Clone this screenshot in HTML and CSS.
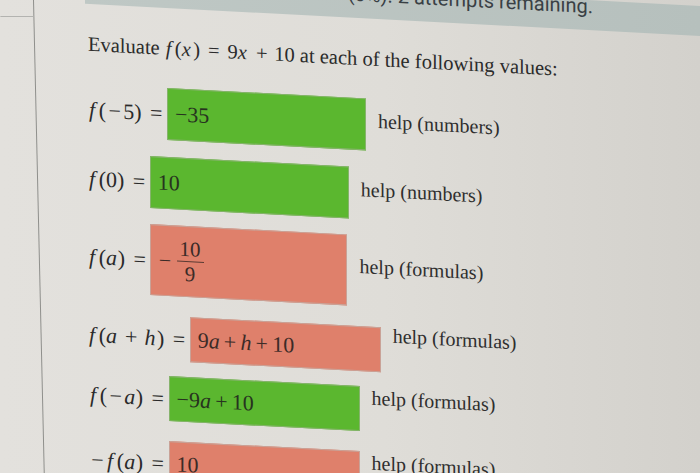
FILE: index.html
```html
<!DOCTYPE html>
<html lang="en">
<head>
<meta charset="utf-8">
<title>Evaluate f(x)</title>
<link rel="stylesheet" href="styles.css">
</head>
<body>
<div class="screen">
  <div class="rail"><div class="rail-top"></div></div>
  <div class="main">
    <div class="status"><span class="status-text">(0%). 2 attempts remaining.</span></div>
    <p class="prompt">Evaluate <span class="math"><span class="mi mi-f">f</span>(<span class="mi mi-x">x</span>)<span class="op rel">=</span>9<span class="mi mi-x">x</span><span class="op bin">+</span>10</span> at each of the following values:</p>
    <div class="rows">
      <div class="row">
        <span class="label math"><span class="mi mi-f">f</span>(<span class="op">−</span>5)<span class="op rel">=</span></span>
        <div class="answer correct size-lg"><span class="mq">−35</span></div>
        <span class="help">help (numbers)</span>
      </div>
      <div class="row">
        <span class="label math"><span class="mi mi-f">f</span>(0)<span class="op rel">=</span></span>
        <div class="answer correct size-lg"><span class="mq">10</span></div>
        <span class="help">help (numbers)</span>
      </div>
      <div class="row sp-16">
        <span class="label math"><span class="mi mi-f">f</span>(<span class="mi mi-a">a</span>)<span class="op rel">=</span></span>
        <div class="answer incorrect size-frac">
          <span class="mq"><span class="op">−</span><span class="frac"><span class="num">10</span><span class="den">9</span></span></span>
        </div>
        <span class="help">help (formulas)</span>
      </div>
      <div class="row sp-20">
        <span class="label math"><span class="mi mi-f">f</span>(<span class="mi mi-a">a</span><span class="op bin">+</span><span class="mi mi-h">h</span>)<span class="op rel">=</span></span>
        <div class="answer incorrect size-sm"><span class="mq">9<span class="mi">a</span><span class="op bin-sm">+</span><span class="mi">h</span><span class="op bin-sm">+</span>10</span></div>
        <span class="help help-top-lg">help (formulas)</span>
      </div>
      <div class="row sp-15 indent">
        <span class="label math"><span class="mi mi-f">f</span>(<span class="op">−</span><span class="mi mi-a">a</span>)<span class="op rel">=</span></span>
        <div class="answer correct size-sm"><span class="mq">−9<span class="mi">a</span><span class="op bin-sm">+</span>10</span></div>
        <span class="help help-top">help (formulas)</span>
      </div>
      <div class="row sp-20 indent">
        <span class="label math"><span class="op">−</span><span class="mi mi-f">f</span>(<span class="mi mi-a">a</span>)<span class="op rel">=</span></span>
        <div class="answer incorrect size-sm"><span class="mq">10</span></div>
        <span class="help help-top">help (formulas)</span>
      </div>
    </div>
  </div>
</div>
</body>
</html>
```

FILE: styles.css
```css
html, body {
  margin: 0;
  padding: 0;
  width: 700px;
  height: 473px;
  overflow: hidden;
}

body {
  background: linear-gradient(90deg, #e3e1dd 0%, #dfddd8 55%, #d3d1cc 100%);
  font-family: "Liberation Serif", "DejaVu Serif", "Times New Roman", serif;
  color: #2b2b2b;
}

.screen {
  display: flex;
  height: 473px;
}

.rail {
  width: 33px;
  flex: none;
  border-right: 1px solid #8f8f8c;
  transform: skewX(1.3deg);
  transform-origin: 0 0;
}

.rail-top {
  height: 16px;
  border-bottom: 1px solid #b3b3b0;
}

.main {
  flex: 1;
  min-width: 0;
  transform: skewY(3deg);
  transform-origin: 0 0;
}

.status {
  height: 30px;
  margin-top: -29px;
  margin-left: 51px;
  background: linear-gradient(90deg, #bfc8c5 0%, #b6c0bd 100%);
  display: flex;
  justify-content: flex-end;
  padding-right: 107px;
  font-family: Roboto, "Liberation Sans", sans-serif;
  font-size: 20px;
  line-height: 20px;
  color: #394045;
  white-space: nowrap;
}

.status-text {
  margin-top: -4px;
}

.prompt {
  margin: 28px 0 0 54px;
  font-size: 20.5px;
  line-height: 24px;
  white-space: nowrap;
}

.math {
  white-space: nowrap;
}

.mi {
  font-style: italic;
}

.mi-f {
  margin-left: 0.04em;
  margin-right: 0.17em;
}

.mi-x {
  margin-right: 0.12em;
}

.mi-a {
  margin-right: 0.03em;
}

.mi-h {
  margin-right: 0.06em;
}

.op {
  padding: 0 0.107em;
}

.rel {
  margin: 0 0.278em;
}

.bin {
  margin: 0 0.222em;
}

.bin-sm {
  padding: 0 0.05em;
  margin: 0 0.14em;
}

.rows {
  margin: 28px 0 0 54px;
  display: flex;
  flex-direction: column;
}

.row {
  display: flex;
  align-items: center;
  margin-top: 17px;
}

.row:first-child {
  margin-top: 0;
}

.row.sp-15 {
  margin-top: 15px;
}

.row.sp-16 {
  margin-top: 16px;
}

.row.sp-20 {
  margin-top: 20px;
}

.row.indent {
  margin-left: 1px;
}

.label {
  font-size: 22px;
  line-height: 26px;
  color: #2a2a2a;
}

.label .rel {
  margin-right: 0.1em;
}

.answer {
  box-sizing: border-box;
  flex: none;
  display: flex;
  align-items: center;
  padding-left: 7px;
  border: 1px solid #a4a7a0;
  font-size: 22px;
  line-height: 24px;
}

.correct {
  background: #5bb72f;
  border-color: #86b36c;
  color: #27331f;
}

.incorrect {
  background: #df806b;
  border-color: #c9a297;
  color: #3b2b27;
}

.size-lg {
  width: 199px;
  height: 52px;
}

.size-frac {
  width: 197px;
  height: 71px;
  padding-left: 5px;
}

.size-sm {
  width: 191px;
  height: 45px;
}

.mq {
  display: inline-flex;
  align-items: center;
  white-space: nowrap;
}

.frac {
  display: inline-flex;
  flex-direction: column;
  align-items: center;
  margin-left: 3px;
  font-size: 21px;
  line-height: 21px;
}

.num {
  padding: 0 3px 1px;
  border-bottom: 1px solid #5a3a33;
}

.den {
  padding-top: 2px;
}

.help {
  margin-left: 12px;
  margin-bottom: 9px;
  font-size: 20px;
  line-height: 24px;
  color: #2e2e2e;
  white-space: nowrap;
}

.help.help-top {
  align-self: flex-start;
  margin-bottom: 0;
  margin-top: -1px;
}

.help.help-top-lg {
  align-self: flex-start;
  margin-bottom: 0;
  margin-top: -4px;
}
```
